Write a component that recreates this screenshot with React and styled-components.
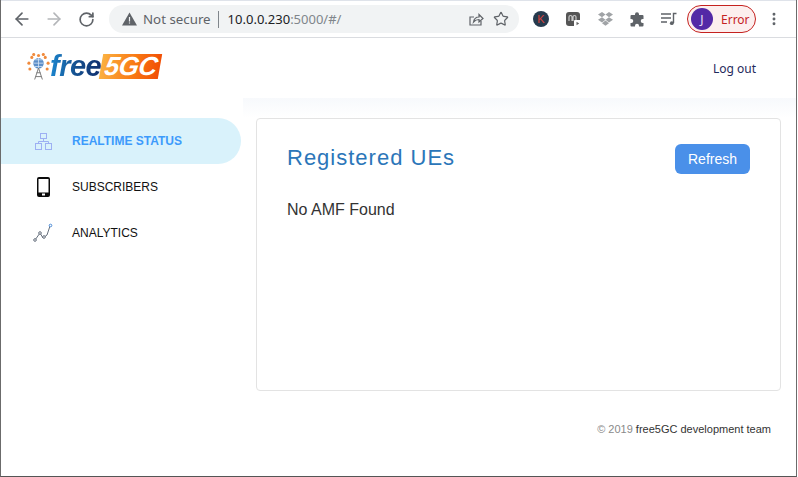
import React from "react";
import styled, { createGlobalStyle } from "styled-components";
import { ArrowLeft, ArrowRight, RotateCw, Star, MoreVertical } from "lucide-react";

const GlobalStyle = createGlobalStyle`
  html, body { margin: 0; padding: 0; background: #fff; }
  * { box-sizing: border-box; }
  body { font-family: "Liberation Sans", Arial, sans-serif; }
`;

const Window = styled.div`
  width: 797px;
  height: 477px;
  display: flex;
  flex-direction: column;
  border-left: 1px solid #6b6b6b;
  border-right: 1px solid #6b6b6b;
  border-bottom: 1px solid #555;
  background: #fff;
  overflow: hidden;
`;

const Toolbar = styled.div`
  height: 38px;
  flex: none;
  display: flex;
  align-items: center;
  padding: 0 0 0 5px;
  border-top: 1px solid #dfe3ea;
  border-bottom: 1px solid #dadce0;
`;

const NavButton = styled.div`
  width: 32px;
  height: 30px;
  display: flex;
  align-items: center;
  justify-content: center;
  color: ${({ $off }) => ($off ? "#b4b6b9" : "#5f6368")};
`;

const Omnibox = styled.div`
  width: 410px;
  height: 28px;
  margin-left: 7px;
  padding: 0 6px 0 13px;
  border-radius: 14px;
  background: #f1f3f4;
  display: flex;
  align-items: center;
  font-family: "Noto Sans", sans-serif;
`;

const NotSecure = styled.span`
  color: #5f6368;
  font-size: 13.3px;
  margin-left: 6px;
  padding-right: 7px;
  border-right: 1px solid #80868b;
  line-height: 17px;
`;

const Url = styled.span`
  color: #80868b;
  font-size: 13px;
  margin-left: 9px;
  flex: 1;
  b { font-weight: 400; color: #202124; }
`;

const OmniIcon = styled.div`
  width: 25px;
  display: flex;
  justify-content: center;
  color: #5f6368;
`;

const Extensions = styled.div`
  display: flex;
  align-items: center;
  margin-left: 6px;
`;

const ExtSlot = styled.div`
  width: 32px;
  height: 28px;
  display: flex;
  align-items: center;
  justify-content: center;
  color: #5f6368;
`;

const KBadge = styled.div`
  width: 16px;
  height: 16px;
  border-radius: 50%;
  background: #263a4d;
  color: #d8433b;
  font-size: 11px;
  display: flex;
  align-items: center;
  justify-content: center;
`;

const ProfileChip = styled.div`
  width: 69px;
  height: 28px;
  margin-left: 2px;
  border: 1px solid #c5221f;
  border-radius: 14px;
  background: #fcefee;
  display: flex;
  align-items: center;
  padding-left: 3px;
  font-family: "Noto Sans", sans-serif;
  font-size: 12px;
  color: #c5221f;
`;

const Avatar = styled.div`
  width: 22px;
  height: 22px;
  border-radius: 50%;
  background: #5329a6;
  color: #e8e0f5;
  display: flex;
  align-items: center;
  justify-content: center;
  margin-right: 8px;
  font-size: 12px;
`;

const Menu = styled.div`
  width: 36px;
  display: flex;
  justify-content: center;
  color: #5f6368;
`;

const Header = styled.header`
  height: 60px;
  flex: none;
  display: flex;
  align-items: center;
  justify-content: space-between;
  padding: 0 40px 0 26px;
`;

const Logo = styled.div`
  display: flex;
  align-items: center;
  height: 30px;
  margin-top: -3px;
`;

const LogoFree = styled.span`
  font-style: italic;
  font-weight: 700;
  font-size: 29px;
  letter-spacing: -0.5px;
  margin-left: -1px;
  background: linear-gradient(90deg, #1b86cf, #15508f 50%, #112f6e);
  -webkit-background-clip: text;
  background-clip: text;
  color: transparent;
`;

const Logo5gc = styled.span`
  font-style: italic;
  font-weight: 700;
  font-size: 26px;
  letter-spacing: -0.5px;
  color: #fff;
  height: 25px;
  line-height: 25px;
  padding: 0 3px 0 4px;
  background: linear-gradient(90deg, #fbb040, #f97a14 55%, #f14f05);
  transform: skewX(-10deg);
`;

const LogOut = styled.a`
  font-family: "Noto Sans", sans-serif;
  font-size: 12px;
  color: #1f2a5c;
  margin-top: 1px;
`;

const Body = styled.div`
  flex: 1;
  display: flex;
  min-height: 0;
`;

const Sidebar = styled.nav`
  width: 242px;
  flex: none;
  padding-top: 20px;
  display: flex;
  flex-direction: column;
`;

const NavItem = styled.div`
  width: 240px;
  height: 46px;
  display: flex;
  align-items: center;
  border-radius: 0 23px 23px 0;
  background: ${({ $active }) => ($active ? "#d9f2fb" : "transparent")};
  color: ${({ $active }) => ($active ? "#3d9bfb" : "#111")};
  font-weight: ${({ $active }) => ($active ? 700 : 400)};
  font-size: 12px;
`;

const NavIcon = styled.div`
  width: 20px;
  margin: 0 19px 0 32px;
  display: flex;
  align-items: center;
  justify-content: center;
`;

const Main = styled.main`
  flex: 1;
  display: flex;
  flex-direction: column;
  padding: 20px 15px 0 13px;
  background: linear-gradient(180deg, #f7f9fc 0, #fff 20px);
`;

const Card = styled.section`
  height: 273px;
  border: 1px solid #e3e3e3;
  border-radius: 4px;
  background: #fff;
  padding: 25px 30px;
`;

const CardHead = styled.div`
  display: flex;
  align-items: flex-start;
  justify-content: space-between;
`;

const Title = styled.h4`
  margin: 0;
  font-size: 22px;
  line-height: 27px;
  font-weight: 400;
  letter-spacing: 1px;
  color: #2b76b9;
`;

const RefreshButton = styled.button`
  width: 75px;
  height: 30px;
  border: none;
  border-radius: 6px;
  background: #4a90e9;
  color: #fff;
  font-family: inherit;
  font-size: 14px;
`;

const Message = styled.p`
  margin: 26px 0 0;
  font-size: 16px;
  line-height: 20px;
  color: #333;
`;

const Footer = styled.footer`
  margin-top: 32px;
  padding-right: 10px;
  text-align: right;
  font-size: 11px;
  line-height: 13px;
  color: #333;
  span { color: #8a8a8a; }
`;

const TowerLogo = () => (
  <svg width="24" height="28" viewBox="0 0 25 28">
    {[[12, 2], [5, 4], [19, 4], [2, 10], [22, 10], [3, 16], [21, 16], [7, 1], [17, 1]].map(([cx, cy], i) => (
      <circle key={i} cx={cx} cy={cy} r="1.6" fill="#f08a3c" />
    ))}
    <circle cx="12" cy="10" r="5.5" fill="#5d8fc9" />
    <path d="M6.5 10h11M12 4.5v11M8 6.5h8M8 13.5h8" stroke="#dce8f5" strokeWidth=".8" />
    <path d="M12 15l-4 12M12 15l4 12M10 20h4M9 24h6" stroke="#777" strokeWidth="1" fill="none" />
  </svg>
);

const NetworkIcon = () => (
  <svg width="17" height="17" viewBox="0 0 17 17" fill="none" stroke="#9db0f3" strokeWidth="1">
    <rect x="5.5" y="0.5" width="6" height="5" />
    <rect x="0.5" y="10.5" width="6" height="6" />
    <rect x="10.5" y="10.5" width="6" height="6" />
    <path d="M8.5 5.5v3M3.5 10.5v-2h10v2" />
  </svg>
);

const PhoneIcon = () => (
  <svg width="13" height="20" viewBox="0 0 13 20">
    <rect x="0" y="0" width="13" height="20" rx="2" fill="#0b0b0b" />
    <rect x="1.5" y="2" width="10" height="13.5" fill="#fff" />
    <rect x="5" y="16.5" width="3" height="2" fill="#fff" />
  </svg>
);

const ChartIcon = () => (
  <svg width="20" height="20" viewBox="0 0 20 20" fill="none" stroke="#55606e" strokeWidth=".9">
    <path d="M2 17l5-7 3 5 4-3 3-9" />
    <circle cx="2" cy="17" r="1.3" fill="#fff" />
    <circle cx="7" cy="10" r="1.3" fill="#fff" />
    <circle cx="11" cy="14" r="1.3" fill="#fff" />
    <circle cx="17.5" cy="2.5" r="1.3" fill="#fff" stroke="#3a7fd0" />
  </svg>
);

const ShareIcon = () => (
  <svg width="16" height="16" viewBox="0 0 16 16" fill="none" stroke="#5f6368" strokeWidth="1.2">
    <path d="M13 10v4H2V6h4" />
    <path d="M5.5 11c.5-3 2.5-5 5.5-5V3.5l4 4-4 3.5V8.5c-2 0-4 .8-5.5 2.5z" />
  </svg>
);

const WarningIcon = () => (
  <svg width="15" height="14" viewBox="0 0 15 14">
    <path d="M7.5 0.5L15 13.5H0z" fill="#5f6368" />
    <path d="M6.9 5h1.2v4.5H6.9zM6.9 10.4h1.2v1.2H6.9z" fill="#f1f3f4" />
  </svg>
);

const CapturedIcon = () => (
  <svg width="15" height="15" viewBox="0 0 15 15">
    <rect width="14" height="14" rx="3" fill="#555" />
    <path d="M3 9V5a1.5 1.5 0 013 0v4M7 9V5a1.5 1.5 0 013 0v3" fill="none" stroke="#c9c9c9" strokeWidth="1.2" />
    <rect x="8" y="8" width="7" height="7" rx="1" fill="#fff" />
    <path d="M10.5 9.8l2.7 1.7-2.7 1.7z" fill="#666" />
  </svg>
);

const DropboxIcon = () => (
  <svg width="15" height="14" viewBox="0 0 15 14" fill="#a0a3a6">
    <path d="M4 0L0 2.6l4 2.6 3.5-2.6zM11 0L7.5 2.6 11 5.2l4-2.6zM0 7.8l4 2.6 3.5-2.6L4 5.2zM11 5.2L7.5 7.8l3.5 2.6 4-2.6zM4 11.2l3.5 2.6 3.5-2.6-3.5-2.6z" />
  </svg>
);

const PuzzleIcon = () => (
  <svg width="15" height="15" viewBox="0 0 15 15" fill="#5f6368">
    <path d="M5 2.2a2 2 0 014 0V3h3.5a1 1 0 011 1v3h-.8a2 2 0 000 4h.8v2.500a1 1 0 01-1 1H9v-.8a2 2 0 00-4 0v.8H1.500a1 1 0 01-1-1V11h.8a2 2 0 000-4H.5V4a1 1 0 011-1H5z" />
  </svg>
);

const MusicQueueIcon = () => (
  <svg width="16" height="14" viewBox="0 0 16 14" fill="none" stroke="#5f6368" strokeWidth="1.400">
    <path d="M0 2h10M0 6h10M0 10h6" />
    <path d="M12.500 11V1.500h3" />
    <circle cx="10.800" cy="11.200" r="1.900" fill="#5f6368" stroke="none" />
  </svg>
);

export default function App() {
  return (
    <>
      <GlobalStyle />
      <Window>
        <Toolbar>
          <NavButton><ArrowLeft size={20} strokeWidth={2} /></NavButton>
          <NavButton $off><ArrowRight size={20} strokeWidth={2} /></NavButton>
          <NavButton><RotateCw size={17} strokeWidth={2.4} /></NavButton>
          <Omnibox>
            <WarningIcon />
            <NotSecure>Not secure</NotSecure>
            <Url><b>10.0.0.230</b>:5000/#/</Url>
            <OmniIcon><ShareIcon /></OmniIcon>
            <OmniIcon><Star size={16} strokeWidth={1.8} /></OmniIcon>
          </Omnibox>
          <Extensions>
            <ExtSlot><KBadge>K</KBadge></ExtSlot>
            <ExtSlot><CapturedIcon /></ExtSlot>
            <ExtSlot><DropboxIcon /></ExtSlot>
            <ExtSlot><PuzzleIcon /></ExtSlot>
            <ExtSlot><MusicQueueIcon /></ExtSlot>
          </Extensions>
          <ProfileChip><Avatar>J</Avatar>Error</ProfileChip>
          <Menu><MoreVertical size={16} strokeWidth={2.4} /></Menu>
        </Toolbar>
        <Header>
          <Logo>
            <TowerLogo />
            <LogoFree>free</LogoFree>
            <Logo5gc>5GC</Logo5gc>
          </Logo>
          <LogOut>Log out</LogOut>
        </Header>
        <Body>
          <Sidebar>
            <NavItem $active><NavIcon><NetworkIcon /></NavIcon>REALTIME STATUS</NavItem>
            <NavItem><NavIcon><PhoneIcon /></NavIcon>SUBSCRIBERS</NavItem>
            <NavItem><NavIcon><ChartIcon /></NavIcon>ANALYTICS</NavItem>
          </Sidebar>
          <Main>
            <Card>
              <CardHead>
                <Title>Registered UEs</Title>
                <RefreshButton>Refresh</RefreshButton>
              </CardHead>
              <Message>No AMF Found</Message>
            </Card>
            <Footer><span>© 2019</span> free5GC development team</Footer>
          </Main>
        </Body>
      </Window>
    </>
  );
}
